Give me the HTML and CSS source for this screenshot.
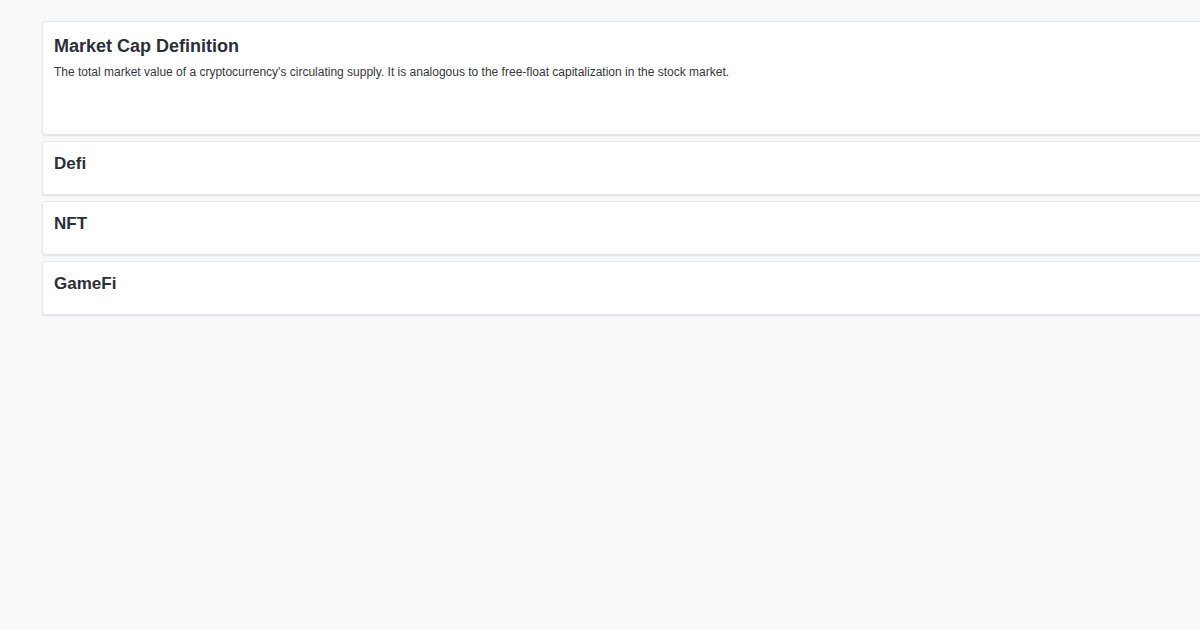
FILE: index.html
```html
<!DOCTYPE html>
<html lang="en">
<head>
    <meta charset="UTF-8">
    <meta name="viewport" content="width=device-width, initial-scale=1.0">
    <title>Crypto Glossary</title>
    <link rel="stylesheet" href="styles.css">
</head>
<body>
    <div class="page">
        <div class="glossary">
            <div class="term-card term-card-open">
                <h2 class="term-title">Market Cap Definition</h2>
                <p class="term-text">The total market value of a cryptocurrency's circulating supply. It is analogous to the free-float capitalization in the stock market.</p>
            </div>
            <div class="term-card">
                <h2 class="term-title">Defi</h2>
            </div>
            <div class="term-card">
                <h2 class="term-title">NFT</h2>
            </div>
            <div class="term-card">
                <h2 class="term-title">GameFi</h2>
            </div>
        </div>
    </div>
</body>
</html>
```

FILE: styles.css
```css
body {
    margin: 0;
    background-color: #f8f9fb;
    font-family: "Liberation Sans", Arial, sans-serif;
    color: #2b2f3a;
}

.page {
    width: 100%;
    height: 100vh;
    overflow: hidden;
}

.glossary {
    display: flex;
    flex-direction: column;
    gap: 6px;
    padding: 21px 0 0 42px;
    width: 1240px;
}

.term-card {
    background-color: #fff;
    border: 1px solid #e6e7ea;
    border-radius: 3px;
    box-shadow: 0 1px 2px rgba(0, 0, 0, 0.1);
    padding: 11px 11px 11px 11px;
}

.term-title {
    margin: 0 0 8px;
    font-size: 17px;
    line-height: 22px;
    font-weight: bold;
    color: #2b2f3a;
}

.term-card-open {
    min-height: 88px;
    padding-top: 13px;
}

.term-card-open .term-title {
    font-size: 18px;
}

.term-text {
    margin: 0;
    font-size: 12px;
    line-height: 15px;
    color: #35383f;
}
```
